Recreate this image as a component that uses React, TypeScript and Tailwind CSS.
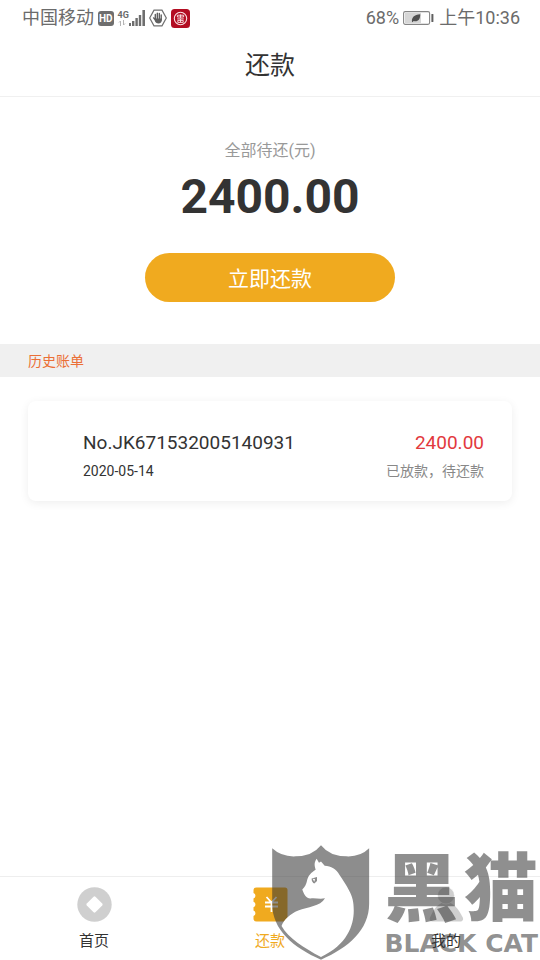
import type { ReactNode } from "react";

type Bill = { no: string; date: string; amount: string; status: string };
type NavItem = { key: string; label: string; icon: ReactNode; active?: boolean };

const BILLS: Bill[] = [
  { no: "No.JK671532005140931", date: "2020-05-14", amount: "2400.00", status: "已放款，待还款" },
];

function SignalIcon() {
  return (
    <svg className="h-5 w-4" viewBox="0 0 16 20" fill="#6e6e6e" aria-hidden="true">
      <rect x="0" y="15" width="2" height="3" />
      <rect x="3" y="13" width="2.4" height="5" />
      <rect x="6.4" y="10" width="2.4" height="8" />
      <rect x="9.8" y="7" width="2.4" height="11" />
      <rect x="13.4" y="2" width="2.6" height="16" />
    </svg>
  );
}

function DataArrows() {
  return (
    <svg className="h-1.5 w-2" viewBox="0 0 8 6" fill="none" stroke="#b5b5b5" aria-hidden="true">
      <path d="M2.5 6V1M1 2.5 2.5 1M5.5 0v5M7 3.5 5.5 5" />
    </svg>
  );
}

function HandIcon() {
  return (
    <svg className="h-[18px] w-[18px]" viewBox="0 0 18 18" aria-hidden="true">
      <path d="M5 1.2h8L17.3 9 13 16.8H5L.7 9z" fill="none" stroke="#707070" strokeWidth="1.2" />
      <g stroke="#606060" strokeWidth="1.4" strokeLinecap="round">
        <path d="M6.3 5.4v5M8.3 4.2v6M10.3 4.4v6M12.2 6v5M4.6 8.9l2.2 2.6" />
      </g>
      <path d="M5.8 9.5h7v1.6c0 2-1.2 3.4-3.4 3.4-1.8 0-3-1-3.6-2.8z" fill="#606060" />
    </svg>
  );
}

function SealIcon() {
  return (
    <svg className="h-[19px] w-[19px]" viewBox="0 0 19 19" fill="none" aria-hidden="true">
      <rect width="19" height="19" rx="3.5" fill="#b30d22" />
      <circle cx="9.5" cy="9.5" r="6.2" stroke="#fbe3e5" strokeWidth="1.1" />
      <g stroke="#fbe3e5" strokeWidth="0.9">
        <path d="M6.4 6.2h6.2M6.4 8h6.2M6.4 6.2V8M9.5 5.5v3.4M12.6 6.2V8" />
        <path d="M6.2 9.9h6.6M6.8 11.4h5.4v2H6.8zM9.5 9.9v3.5" />
      </g>
    </svg>
  );
}

function BatteryIcon() {
  return (
    <svg className="h-4 w-8" viewBox="0 0 32 16" aria-hidden="true">
      <rect x="0.6" y="1.6" width="26" height="12.8" rx="1.6" fill="#fff" stroke="#858585" strokeWidth="1.1" />
      <rect x="2" y="3" width="16" height="10" fill="#d6d6d6" />
      <path d="M9 11.8c-.6-4.4 2.2-7 8.2-7.6.2 5-2.3 8-6.5 6.9L9.4 12.2z" fill="#505050" />
      <rect x="28.4" y="4" width="2" height="8" rx=".6" fill="#606060" />
    </svg>
  );
}

function HomeIcon() {
  return (
    <svg className="h-[35px] w-[35px]" viewBox="0 0 35 35" aria-hidden="true">
      <circle cx="17.5" cy="17.5" r="17.2" fill="#cfcfcf" />
      <path d="M16.6 9.8 9.8 16.6a1.3 1.3 0 0 0 0 1.8l6.8 6.8a1.3 1.3 0 0 0 1.8 0l6.8-6.8a1.3 1.3 0 0 0 0-1.8L18.4 9.8a1.3 1.3 0 0 0-1.8 0z" fill="#fff" />
    </svg>
  );
}

function RepayIcon() {
  return (
    <svg className="h-[35px] w-[35px]" viewBox="0 0 35 35" aria-hidden="true">
      <path
        d="M3.5.5H32A2.5 2.5 0 0 1 34.5 3v29a2.5 2.5 0 0 1-2.5 2.5H3.5A3 3 0 0 1 .5 31.5V29a3 3 0 0 0 0-5.6v-3.1a3 3 0 0 0 0-5.6v-3.1a3 3 0 0 0 0-5.6V3.5A3 3 0 0 1 3.5.5z"
        fill="#f0aa1f"
      />
      <path d="m13.5 10 5 5.5 5-5.5M12 15.5h13M12 19.5h13M18.5 15.5V25" fill="none" stroke="#fff" strokeWidth="1.8" />
    </svg>
  );
}

function MineIcon() {
  return (
    <svg className="h-[35px] w-[35px]" viewBox="0 0 35 35" fill="#cfcfcf" aria-hidden="true">
      <path d="M17 15c7 0 12.5 7 16.8 15.5.9 2.2-.3 4-2.6 4H3.3C1 34.5.2 32.7 1 30.5 4.5 22 10 15 17 15z" />
      <circle cx="17" cy="8.5" r="8.5" stroke="#fff" strokeWidth=".6" />
    </svg>
  );
}

const NAV_ITEMS: NavItem[] = [
  { key: "home", label: "首页", icon: <HomeIcon /> },
  { key: "repay", label: "还款", icon: <RepayIcon />, active: true },
  { key: "mine", label: "我的", icon: <MineIcon /> },
];

function StatusBar() {
  return (
    <div className="flex items-center justify-between pt-1 pr-5 pl-[22px] text-lg leading-7 text-[#6b6b6b]">
      <div className="flex items-center gap-1">
        <span>中国移动</span>
        <span className="rounded-[3px] bg-[#6e6e6e] px-px text-[10px] leading-[15px] font-bold text-white">HD</span>
        <div className="flex items-center">
          <div className="flex flex-col">
            <span className="text-[9px] leading-[10px] font-bold">4G</span>
            <DataArrows />
          </div>
          <SignalIcon />
        </div>
        <HandIcon />
        <SealIcon />
      </div>
      <div className="flex items-center gap-1">
        <span>68%</span>
        <BatteryIcon />
        <span>上午10:36</span>
      </div>
    </div>
  );
}

function BillCard({ bill }: { bill: Bill }) {
  return (
    <li className="flex justify-between rounded-lg bg-white pt-7 pr-7 pb-5 pl-[55px] shadow-[0_2px_10px_rgba(0,0,0,0.07)]">
      <div>
        <p className="text-[19px] leading-7 text-[#333]">{bill.no}</p>
        <p className="pt-1 text-sm leading-5 text-[#333]">{bill.date}</p>
      </div>
      <div className="text-right">
        <p className="text-[19px] leading-7 text-[#e2393d]">{bill.amount}</p>
        <p className="pt-1 text-sm leading-5 text-[#888]">{bill.status}</p>
      </div>
    </li>
  );
}

function Watermark() {
  return (
    <div className="pointer-events-none absolute right-0 bottom-0 flex items-end gap-3.5 pr-0.5">
      <svg className="h-[115px] w-[98px]" viewBox="34 14 292 344" aria-hidden="true">
        <path
          d="M34 24Q62 50 104 48 154 48 180 15 206 48 256 48 298 50 324 24V190C324 268 262 322 180 357 98 322 34 268 34 190Z"
          fill="#333"
          fillOpacity=".56"
        />
        <path
          d="M167 55 174 67 180 63 191 76C210 77 226 86 235 103 246 120 256 134 264 150 274 168 278 184 278 210 278 256 258 312 180 349 130 322 82 292 62 256 68 238 88 220 112 210 140 198 178 198 192 173 176 177 162 171 148 174 136 174 130 163 124 147 132 139 136 132 138 122 141 106 151 96 164 88 161 76 158 68 167 55Z"
          fill="#fff"
        />
        <path d="M152 114 168 110 168 122 160 129C156 128 151 121 152 114Z" fill="#8c8c8c" />
        <path d="m155 115 7 1-2 8z" fill="#fff" />
      </svg>
      <div className="flex flex-col text-[#333]/55">
        <span className="flex justify-between font-['Noto_Sans_CJK_SC',sans-serif] text-[74px] leading-[74px] font-black">
          <span>黑</span>
          <span>猫</span>
        </span>
        <span className="pt-2 font-['DejaVu_Sans',sans-serif] text-[25px] leading-8 font-bold">BLACK CAT</span>
      </div>
    </div>
  );
}

export default function App() {
  return (
    <div className="relative flex min-h-screen flex-col bg-white font-[Roboto,'Noto_Sans_CJK_SC',sans-serif]">
      <StatusBar />
      <header className="flex items-center justify-center border-b border-[#f0f0f0] pt-4 pb-3">
        <h1 className="text-[25px] leading-9 text-[#333]">还款</h1>
      </header>

      <main className="flex-1">
        <section className="flex flex-col items-center pt-[42px] pb-[42px]">
          <p className="text-base text-[#999]">全部待还(元)</p>
          <p className="pt-1 text-5xl leading-[60px] font-bold text-[#333]">2400.00</p>
          <button className="mt-[26px] h-[49px] w-[250px] rounded-full bg-[#f0aa1f] pt-1 text-[21px] text-white">
            立即还款
          </button>
        </section>

        <section>
          <h2 className="bg-[#f0f0f0] px-7 pt-[7px] pb-1.5 text-sm text-[#eb6f36]">历史账单</h2>
          <ul className="px-7 py-6">
            {BILLS.map((bill) => (
              <BillCard key={bill.no} bill={bill} />
            ))}
          </ul>
        </section>
      </main>

      <nav className="flex border-t border-[#eee] px-1.5 pt-2.5 pb-[7px]">
        {NAV_ITEMS.map((item) => (
          <a
            key={item.key}
            href={`#${item.key}`}
            className={`flex flex-1 flex-col items-center gap-[7px] text-[15px] leading-6 ${
              item.active ? "text-[#f0aa1f]" : "text-[#333]"
            }`}
          >
            {item.icon}
            {item.label}
          </a>
        ))}
      </nav>

      <Watermark />
    </div>
  );
}
